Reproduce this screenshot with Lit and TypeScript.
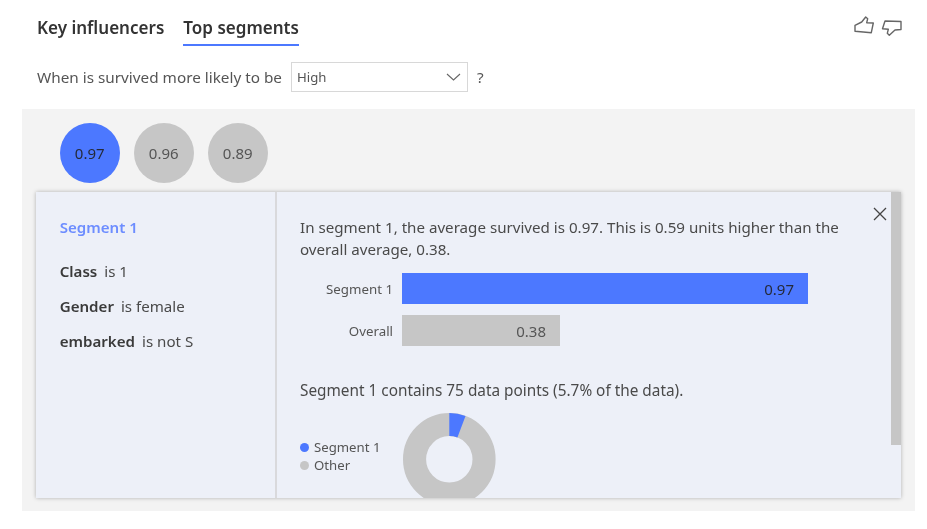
import { LitElement, html, css } from "lit";
import { customElement } from "lit/decorators.js";

function wedge(cx: number, cy: number, R: number, r: number, deg: number) {
  const a = (deg * Math.PI) / 180;
  const x = (rad: number) => cx + rad * Math.sin(a);
  const y = (rad: number) => cy - rad * Math.cos(a);
  return `M${cx} ${cy - R}A${R} ${R} 0 0 1 ${x(R)} ${y(R)}L${x(r)} ${y(r)}A${r} ${r} 0 0 0 ${cx} ${cy - r}Z`;
}

@customElement("app-root")
export class AppRoot extends LitElement {
  static styles = css`
    :host {
      display: block;
      width: 927px;
      height: 529px;
      background: #fff;
      overflow: hidden;
      font-family: "Noto Sans", "Open Sans", sans-serif;
      color: #444;
      box-sizing: border-box;
      padding: 0 12px 18px 22px;
      filter: blur(0.35px);
    }
    .head {
      height: 46px;
      display: flex;
      align-items: flex-start;
      padding: 0 0 0 15px;
      box-sizing: border-box;
    }
    .tab {
      font-size: 17.05px;
      font-weight: 600;
      color: #333;
      line-height: 24px;
      padding-top: 1px;
      margin-top: 15px;
      height: 31px;
      box-sizing: border-box;
      margin-right: 19px;
      white-space: nowrap;
    }
    .tab.on { border-bottom: 2px solid #4c78ff; }
    .thumbs { margin-left: auto; display: flex; gap: 6px; margin-top: 14px; margin-right: 12px; }
    .thumbs svg { display: block; }
    .question {
      height: 63px;
      padding: 16px 0 0 15px;
      box-sizing: border-box;
      display: flex;
      align-items: flex-start;
      font-size: 15.3px;
      color: #555;
    }
    .question > span { line-height: 30px; white-space: nowrap; }
    .select {
      width: 177px;
      height: 30px;
      box-sizing: border-box;
      border: 1px solid #d8d8d8;
      margin: 0 9px 0 9px;
      padding: 0 5px 0 5px;
      display: flex;
      align-items: center;
      justify-content: space-between;
      font-size: 13.2px;
      color: #555;
    }
    .panel {
      background: #f3f3f3;
      height: 402px;
      padding: 14px 14px 13px;
      box-sizing: border-box;
      display: flex;
      flex-direction: column;
    }
    .bubbles { display: flex; gap: 14px; padding-left: 23.7px; height: 60px; margin-bottom: 9px; }
    .bubble {
      width: 60px;
      height: 60px;
      border-radius: 50%;
      background: #c6c6c6;
      display: flex;
      align-items: center;
      justify-content: center;
      font-size: 15px;
      color: #555;
    }
    .bubble.on { background: #4c78ff; color: #252a3a; }
    .card {
      flex: 1;
      min-height: 0;
      background: #edf0f8;
      box-shadow: 0 0 4px rgba(0, 0, 0, 0.28);
      display: flex;
      position: relative;
      overflow: hidden;
    }
    .left {
      width: 241px;
      box-sizing: border-box;
      border-right: 2px solid #d9d9dc;
      padding: 24px 0 0 23.7px;
      font-size: 15.1px;
    }
    .seg { color: #6d8dff; font-weight: 600; line-height: 22px; margin-bottom: 23px; }
    .rule { line-height: 20px; margin-bottom: 15px; color: #4a4a4a; white-space: nowrap; }
    .rule b { font-weight: 600; color: #3a3a3a; margin-right: 7px; }
    .right {
      flex: 1;
      min-width: 0;
      padding: 24px 0 0 23px;
      font-size: 15.15px;
      color: #4a4a4a;
      position: relative;
    }
    .sentence { line-height: 22px; width: 550px; }
    .bars { margin-top: 13px; display: flex; flex-direction: column; gap: 11px; }
    .barrow { display: flex; align-items: center; height: 31px; }
    .barlabel { width: 93px; text-align: right; font-size: 13.3px; margin-right: 9px; color: #555; }
    .bar {
      height: 31px;
      box-sizing: border-box;
      display: flex;
      align-items: center;
      justify-content: flex-end;
      padding-right: 14px;
      font-size: 15px;
    }
    .bar.a { background: #4c78ff; color: #252a3a; }
    .bar.b { background: #c6c6c6; color: #555; }
    .contains { margin-top: 33px; line-height: 22px; white-space: nowrap; font-size: 15.35px; }
    .donutrow { display: flex; margin-top: 12px; }
    .legend { width: 103px; padding-top: 25px; font-size: 13.2px; color: #555; }
    .legend div { display: flex; align-items: center; gap: 5px; height: 18px; }
    .dot { width: 9px; height: 9px; border-radius: 50%; background: #c6c6c6; }
    .dot.on { background: #4c78ff; }
    .close { position: absolute; top: 14px; right: 13px; display: block; }
    .scroll { position: absolute; top: 0; right: 0; width: 10px; height: 253px; background: #c6c6c6; }
  `;

  render() {
    return html`
      <div class="head">
        <div class="tab">Key influencers</div>
        <div class="tab on">Top segments</div>
        <div class="thumbs">
          <svg width="22" height="22" viewBox="0 0 22 22" fill="none" stroke="#666" stroke-width="1.4" stroke-linejoin="round">
            <path d="M2 11.3L8.7 8L12.7 3L14.7 4.7L13.7 8.7L20.3 9L18.3 18.7L2 17.3Z" />
          </svg>
          <svg width="22" height="22" viewBox="0 0 22 22" fill="none" stroke="#666" stroke-width="1.4" stroke-linejoin="round">
            <path d="M4 7L20 7.5L20 15.5L14 16L8.3 21.3L6.3 19.3L7.3 15.3L1.5 14.7Z" />
          </svg>
        </div>
      </div>
      <div class="question">
        <span>When is survived more likely to be</span>
        <div class="select">
          <span>High</span>
          <svg width="16" height="8" viewBox="0 0 16 8" fill="none" stroke="#666" stroke-width="1.1">
            <path d="M1 1L7.5 7L14 1" />
          </svg>
        </div>
        <span>?</span>
      </div>
      <div class="panel">
        <div class="bubbles">
          <div class="bubble on">0.97</div>
          <div class="bubble">0.96</div>
          <div class="bubble">0.89</div>
        </div>
        <div class="card">
          <div class="left">
            <div class="seg">Segment 1</div>
            <div class="rule"><b>Class</b>is 1</div>
            <div class="rule"><b>Gender</b>is female</div>
            <div class="rule"><b>embarked</b>is not S</div>
          </div>
          <div class="right">
            <div class="sentence">In segment 1, the average survived is 0.97. This is 0.59 units higher than the overall average, 0.38.</div>
            <div class="bars">
              <div class="barrow">
                <div class="barlabel">Segment 1</div>
                <div class="bar a" style="width:406px">0.97</div>
              </div>
              <div class="barrow">
                <div class="barlabel">Overall</div>
                <div class="bar b" style="width:158px">0.38</div>
              </div>
            </div>
            <div class="contains">Segment 1 contains 75 data points (5.7% of the data).</div>
            <div class="donutrow">
              <div class="legend">
                <div><span class="dot on"></span>Segment 1</div>
                <div><span class="dot"></span>Other</div>
              </div>
              <svg width="94" height="94" viewBox="0 0 94 94">
                <circle cx="46.3" cy="46.3" r="34.75" fill="none" stroke="#c6c6c6" stroke-width="23.1" />
                <path d="${wedge(46.3, 46.3, 46.3, 23.2, 20.5)}" fill="#4c78ff" />
              </svg>
            </div>
          </div>
          <svg class="close" width="16" height="16" viewBox="0 0 16 16" fill="none" stroke="#444" stroke-width="1.3">
            <path d="M2 2L14 14M14 2L2 14" />
          </svg>
          <div class="scroll"></div>
        </div>
      </div>
    `;
  }
}
